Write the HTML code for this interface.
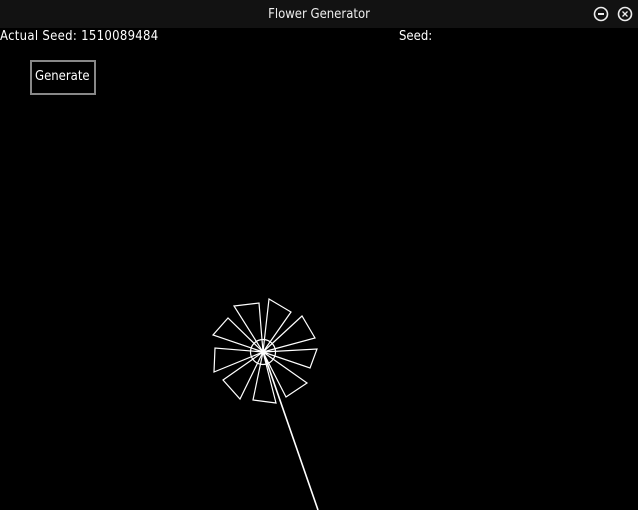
<!DOCTYPE html>
<html><head><meta charset="utf-8"><style>
html,body{margin:0;padding:0;width:638px;height:510px;background:#000;overflow:hidden;font-family:"DejaVu Sans Condensed","DejaVu Sans","Liberation Sans",sans-serif;color:#fff;font-size:13px}
.t{position:absolute;white-space:nowrap;line-height:16px}
</style></head><body>
<div style="position:absolute;left:0;top:0;width:638px;height:28px;background:#121212"></div>
<div class="t" style="left:0;width:638px;text-align:center;top:7px;color:#eee">Flower Generator</div>
<div class="t" style="left:0;top:29px;letter-spacing:0.3px">Actual Seed: 1510089484</div>
<div class="t" style="left:399px;top:29px">Seed:</div>
<div style="position:absolute;left:30px;top:60px;width:62px;height:31px;border:2px solid #888"></div>
<div class="t" style="left:35px;top:69px">Generate</div>
<svg width="638" height="510" style="position:absolute;left:0;top:0">
<g fill="none" stroke="#eee" stroke-width="1.6">
<circle cx="601" cy="14" r="6.5"/><line x1="598" y1="14" x2="604" y2="14" stroke-width="2"/>
<circle cx="625" cy="14" r="6.5"/><path d="M622.5 11.5l5 5M627.5 11.5l-5 5" stroke-width="1.3"/>
</g>
<g fill="none" stroke="#fff" stroke-width="1.2">
<path d="M263 352L234 306L259 303Z"/>
<path d="M263 352L269 299L291 312Z"/>
<path d="M263 352L302 316L315 338Z"/>
<path d="M263 352L317 349L310 368Z"/>
<path d="M263 352L307 383L286 397Z"/>
<path d="M263 352L276 403L253 400Z"/>
<path d="M263 352L240 399L223 380Z"/>
<path d="M263 352L214 372L215 348Z"/>
<path d="M263 352L213 335L228 318Z"/>
<circle cx="263" cy="352" r="12.5"/>
<line x1="264" y1="354" x2="318" y2="510" stroke-width="1.6"/>
</g>
</svg>
</body></html>
